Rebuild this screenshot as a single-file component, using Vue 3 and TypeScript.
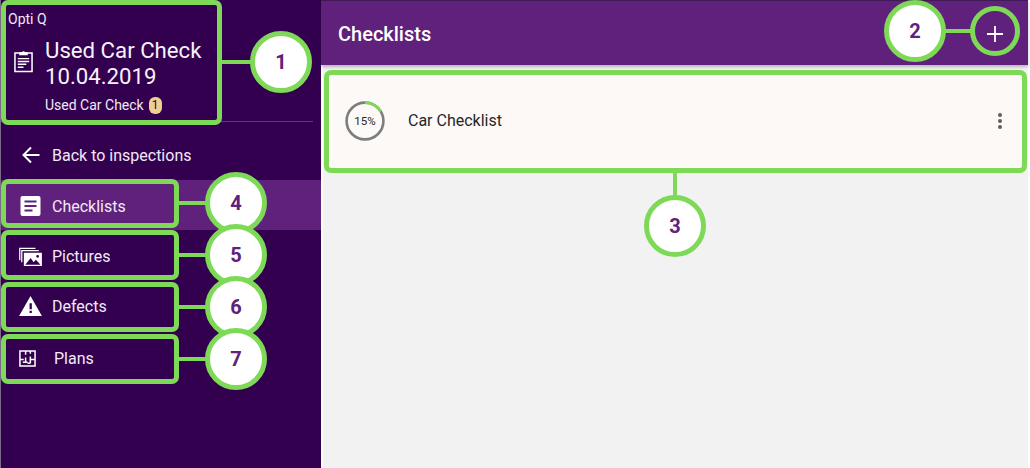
<script setup lang="ts">
interface NavItem {
  label: string;
  icon: string;
  active?: boolean;
}

const navItems: NavItem[] = [
  { label: "Checklists", icon: "list", active: true },
  { label: "Pictures", icon: "pictures" },
  { label: "Defects", icon: "defects" },
  { label: "Plans", icon: "plans" },
];

// callout frames and numbered circles laid over the screen
const frames = ["f1", "f2", "f3", "f4", "f5", "f6", "f7"];
const lines = ["l1", "l2", "l3", "l4", "l5", "l6", "l7"];

const badges = [
  { n: 1, cls: "b1" },
  { n: 2, cls: "b2" },
  { n: 3, cls: "b3" },
  { n: 4, cls: "b4" },
  { n: 5, cls: "b5" },
  { n: 6, cls: "b6" },
  { n: 7, cls: "b7" },
];
</script>

<template>
  <div class="screen">
    <aside class="sidebar">
      <div class="org">Opti Q</div>
      <div class="inspection">
        <svg class="clip" viewBox="0 0 20 24" width="19" height="24">
          <path d="M1 3.5h18v19.5H1z" fill="none" stroke="#fff" stroke-width="1.6" />
          <path d="M5.5 6V2.8h2.8a1.9 1.9 0 0 1 3.4 0h2.8V6z" fill="#fff" />
          <path d="M4 9.5h12M4 12.5h12M4 15.5h9M4 18.5h6" stroke="#fff" stroke-width="1.5" />
        </svg>
        <div class="title">Used Car Check<br />10.04.2019</div>
      </div>
      <div class="sub">
        <span>Used Car Check</span>
        <span class="count">1</span>
      </div>
      <div class="divider"></div>
      <div class="back">
        <span class="icon-slot">
          <svg viewBox="0 0 20 20" width="20" height="20">
            <path d="M18.5 10H2.5M10 2.5 2.5 10l7.5 7.5" fill="none" stroke="#fff" stroke-width="2" />
          </svg>
        </span>
        <span>Back to inspections</span>
      </div>
      <div
        v-for="item in navItems"
        :key="item.label"
        class="nav-row"
        :class="{ active: item.active, plans: item.icon === 'plans' }"
      >
        <span class="icon-slot">
          <svg v-if="item.icon === 'list'" viewBox="0 0 20 20" width="21" height="20">
            <path
              fill="#fff"
              fill-rule="evenodd"
              d="M2 0h16a2 2 0 0 1 2 2v16a2 2 0 0 1-2 2H2a2 2 0 0 1-2-2V2a2 2 0 0 1 2-2zm2 4.5v2h12v-2zm0 4.5v2h12V9zm0 4.5v2h8v-2z"
            />
          </svg>
          <svg v-else-if="item.icon === 'pictures'" viewBox="0 0 24 20" width="23" height="19">
            <path d="M.7 14V1.5h16.5" fill="none" stroke="#fff" stroke-width="1.3" />
            <path d="M2.8 16V3.8h18" fill="none" stroke="#fff" stroke-width="1.3" />
            <path
              fill="#fff"
              fill-rule="evenodd"
              d="M5 6h19v14H5zm1.5 12.7h16l-4.8-5.2-2.5 2.5-3-4.5zM19.5 8.3a1.5 1.5 0 1 0 0 3 1.5 1.5 0 0 0 0-3z"
            />
          </svg>
          <svg v-else-if="item.icon === 'defects'" viewBox="0 0 24 21" width="23" height="20">
            <path
              fill="#fff"
              fill-rule="evenodd"
              d="M12 0 24 21H0zM11 7.5v6.5h2.4V7.5zM11 15.5v2.4h2.4v-2.4z"
            />
          </svg>
          <svg v-else viewBox="0 0 18 18" width="17" height="17">
            <path
              d="M1 1h16v16H1zM1 10h4M7 1v4M7 8v5M4 13h5M12 1v3M12 7v7M12 10h5M9 14h3"
              fill="none"
              stroke="#fff"
              stroke-width="1.6"
            />
          </svg>
        </span>
        <span>{{ item.label }}</span>
      </div>
    </aside>

    <main class="content">
      <header class="topbar">
        <h1>Checklists</h1>
        <svg class="plus" viewBox="0 0 16 16" width="16" height="16">
          <path d="M8 0v16M0 8h16" stroke="#fff" stroke-width="1.8" />
        </svg>
      </header>
      <section class="card">
        <div class="progress">
          <svg viewBox="0 0 40 40" width="40" height="40">
            <circle cx="20" cy="20" r="18.4" fill="none" stroke="#7d7d7d" stroke-width="2.6" />
            <path d="M20 1.6A18.4 18.4 0 0 1 35.7 10.5" fill="none" stroke="#7ed957" stroke-width="2.6" />
          </svg>
          <span>15%</span>
        </div>
        <div class="card-name">Car Checklist</div>
        <div class="dots"><i></i><i></i><i></i></div>
      </section>
    </main>

    <div v-for="l in lines" :key="l" class="line" :class="l"></div>
    <div v-for="f in frames" :key="f" class="frame" :class="f"></div>
    <div v-for="b in badges" :key="b.n" class="badge" :class="b.cls">{{ b.n }}</div>
  </div>
</template>

<style scoped>
.screen {
  position: relative;
  display: flex;
  width: 1030px;
  height: 468px;
  box-sizing: border-box;
  padding-right: 2px;
  overflow: hidden;
  background: #fff;
  font-family: Roboto, "Liberation Sans", sans-serif;
}

.sidebar {
  width: 321px;
  height: 468px;
  flex: none;
  box-sizing: border-box;
  border-left: 1px solid #7b6a8c;
  background: #32004f;
  color: #f1e9f5;
  font-size: 16px;
}

.org {
  padding: 11px 0 0 7px;
  font-size: 14px;
  line-height: 16px;
}

.inspection {
  display: flex;
  align-items: center;
  gap: 12px;
  padding: 10px 0 0 13px;
}

.clip {
  margin-top: -4px;
}

.title {
  font-size: 22.2px;
  line-height: 26px;
  color: #f7f2fa;
}

.sub {
  display: flex;
  align-items: center;
  gap: 5px;
  padding: 7px 0 0 44px;
  font-size: 14px;
  line-height: 18px;
}

.count {
  width: 13px;
  height: 17px;
  border-radius: 6px;
  background: #f0d090;
  color: #32004f;
  font-size: 12px;
  line-height: 17px;
  text-align: center;
}

.divider {
  height: 1px;
  margin: 7px 8px 0 0;
  background: #5a3a72;
}

.back,
.nav-row {
  display: flex;
  align-items: center;
  height: 50px;
  padding-left: 18px;
}

.back {
  margin-top: 8px;
}

.icon-slot {
  display: flex;
  justify-content: center;
  width: 23px;
  margin-right: 10px;
}

.nav-row {
  padding-top: 2px;
  box-sizing: border-box;
}

.nav-row.active {
  background: #5f217b;
}

.nav-row.plans {
  height: 56px;
  padding-top: 0;
}

.nav-row.plans .icon-slot {
  justify-content: flex-start;
  margin-right: 12px;
}

.content {
  flex: 1;
  display: flex;
  flex-direction: column;
  margin-left: 2px;
  background: #f2f2f2;
}

.topbar {
  display: flex;
  align-items: center;
  justify-content: space-between;
  height: 65px;
  margin-left: -2px;
  padding: 2px 25px 0 17px;
  background: #5f217b;
  border-top: 1px solid #3f1a55;
  box-sizing: border-box;
  box-shadow: 0 2px 3px rgba(0, 0, 0, 0.25);
}

.topbar h1 {
  margin: 0;
  color: #fff;
  font-size: 20px;
  font-weight: 500;
}

.card {
  display: flex;
  align-items: center;
  height: 94px;
  margin: 9px 5px 0;
  padding: 0 21px 0 17px;
  background: #fdf9f7;
  color: #262626;
}

.progress {
  position: relative;
  display: flex;
  align-items: center;
  justify-content: center;
  width: 40px;
  height: 40px;
  font-size: 11.5px;
}

.progress svg {
  position: absolute;
  inset: 0;
}

.card-name {
  flex: 1;
  margin-left: 23px;
  font-size: 16px;
  line-height: 24px;
}

.dots {
  display: flex;
  flex-direction: column;
  gap: 2px;
}

.dots i {
  width: 4px;
  height: 4px;
  border-radius: 50%;
  background: #5f5f5f;
}

/* callouts */
.frame {
  position: absolute;
  box-sizing: border-box;
  border: 5px solid #7ed957;
  border-radius: 7px;
}

.f1 { left: 1px; top: 0; width: 221px; height: 125px; }
.f2 { left: 970px; top: 6px; width: 50px; height: 50px; border-radius: 50%; }
.f3 { left: 324px; top: 70px; width: 703px; height: 103px; }
.f4 { left: 1px; top: 179px; width: 178px; height: 49px; }
.f5 { left: 1px; top: 230px; width: 178px; height: 50px; }
.f6 { left: 1px; top: 282px; width: 178px; height: 50px; }
.f7 { left: 1px; top: 334px; width: 178px; height: 50px; }

.line {
  position: absolute;
  background: #7ed957;
}

.l1 { left: 222px; top: 60px; width: 30px; height: 4px; }
.l2 { left: 945px; top: 29px; width: 26px; height: 4px; }
.l3 { left: 673px; top: 172px; width: 4px; height: 24px; }
.l4 { left: 179px; top: 201px; width: 28px; height: 4px; }
.l5 { left: 179px; top: 253px; width: 28px; height: 4px; }
.l6 { left: 179px; top: 305px; width: 28px; height: 4px; }
.l7 { left: 179px; top: 357px; width: 28px; height: 4px; }

.badge {
  position: absolute;
  box-sizing: border-box;
  width: 62px;
  height: 62px;
  border: 5px solid #7ed957;
  border-radius: 50%;
  background: #fff;
  color: #5f217b;
  font-size: 20px;
  font-weight: 700;
  line-height: 52px;
  text-align: center;
}

.b1 { left: 250px; top: 31px; }
.b2 { left: 884px; top: 0; }
.b3 { left: 644px; top: 195px; }
.b4 { left: 205px; top: 172px; }
.b5 { left: 205px; top: 224px; }
.b6 { left: 205px; top: 276px; }
.b7 { left: 205px; top: 328px; }
</style>
